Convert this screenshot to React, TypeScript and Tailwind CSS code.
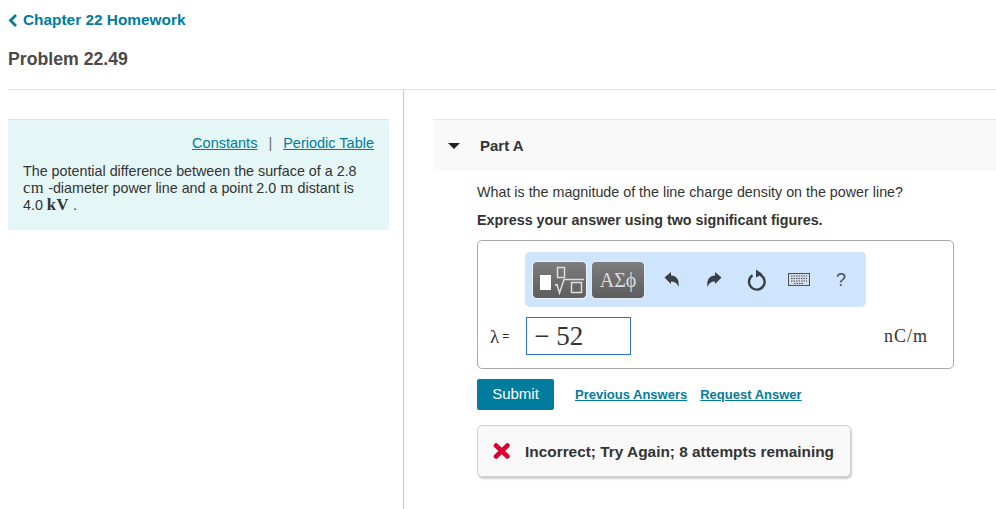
import React from 'react';

const serif = "font-['Liberation_Serif',serif]";

function Toolbar() {
  return (
    <div className="ml-[47px] mt-[11px] flex h-[55px] w-[341px] items-center rounded-[5px] bg-[#cfe4fd] pl-[7px]">
      <div className="flex h-[38px] w-[55px] items-center gap-[1px] rounded-[5px] border border-[#eef3f9] bg-gradient-to-b from-[#7d7d7d] to-[#5e5e5e] pl-[7px]">
        <div className="mt-[6px] h-[15px] w-[11px] bg-white" />
        <svg width="33" height="30" viewBox="0 0 33 30" fill="none" stroke="#dedede" strokeWidth="1.500">
          <rect x="5.500" y="2.500" width="7" height="10" />
          <path d="M3 20.500l2-1 2.500 8.500L12 14.500h20" />
          <rect x="19.500" y="17.500" width="10" height="10" />
        </svg>
      </div>
      <div className={`ml-[4px] flex h-[38px] w-[54px] items-center justify-center rounded-[5px] border border-[#e2e9f2] bg-gradient-to-b from-[#7d7d7d] to-[#5e5e5e] text-[20px] text-[#dcdcdc] ${serif}`}>
        ΑΣϕ
      </div>
      <svg className="ml-[19px]" width="16" height="17" viewBox="0 0 16 17" fill="#3a3f45">
        <path d="M0.500 6.500L7 1v3.500c5.500 0 8.500 4 7.500 11.500-1-3.500-3.500-5.500-7.500-5.500V13z" />
      </svg>
      <svg className="ml-[26px]" width="16" height="17" viewBox="0 0 16 17" fill="#3a3f45">
        <path d="M15.500 6.500L9 1v3.500C3.500 4.500.5 8.500 1.500 16c1-3.500 3.500-5.500 7.500-5.500V13z" />
      </svg>
      <svg className="ml-[25px]" width="20" height="22" viewBox="0 0 20 22" fill="none" stroke="#3a3f45" strokeWidth="2.400">
        <path d="M5.500 6.300a7.800 7.800 0 1 0 7.500-.6" />
        <path d="M9 0.500l6.500 4.500L9 8.500z" fill="#3a3f45" stroke="none" />
      </svg>
      <svg className="ml-[21px]" width="22" height="13" viewBox="0 0 22 13" fill="#d3dde8" stroke="#4b5157" strokeWidth="1">
        <rect x="0.500" y="0.500" width="21" height="12" />
        <path d="M3 3h16M3 5.500h16M3 8h16M6 10.500h10" strokeDasharray="1.500 1" />
      </svg>
      <span className="ml-[26px] text-[18px] leading-none text-[#4a4f55]">?</span>
    </div>
  );
}

export default function App() {
  return (
    <div className="h-[509px] w-[996px] overflow-hidden bg-white font-['Liberation_Sans',Arial,sans-serif] text-[#333]">
      {/* Header */}
      <div className="ml-[8px] h-[90px] border-b border-[#e2e2e2]">
        <a className="flex items-center pt-[11px] text-[15.400px] leading-[18px] font-bold text-[#007c9e]">
          <svg width="10" height="13" viewBox="0 0 10 13" fill="none" stroke="#007c9e" strokeWidth="2.800" className="mr-[5px]">
            <path d="M8 1L2.500 6.500 8 12" />
          </svg>
          Chapter 22 Homework
        </a>
        <h1 className="mt-[20px] text-[17.700px] leading-[20px] font-bold text-[#4a4a4a]">Problem 22.49</h1>
      </div>

      <div className="flex h-[419px]">
        {/* Left column */}
        <div className="w-[404px] shrink-0 border-r border-[#c8c8c8] pt-[29px] pl-[8px]">
          <div className="h-[111px] w-[381px] border-t border-[#e2e2e2] bg-[#e5f6f7] pt-[15px] pr-[15px] pl-[15px]">
            <div className="flex justify-end text-[14.500px] leading-[16px] text-[#007c9e]">
              <a className="underline">Constants</a>
              <span className="mx-[11px] text-[#666]">|</span>
              <a className="underline">Periodic Table</a>
            </div>
            <p className="mt-[12px] w-[340px] text-[14.300px] leading-[17px] text-[#333]">
              The potential difference between the surface of a 2.8{' '}
              <span className={`${serif} inline-block text-[16.500px] leading-[15px] tracking-[0.5px]`}>cm</span> -diameter power line and a point 2.0{' '}
              <span className={`${serif} inline-block text-[16.500px] leading-[15px] tracking-[0.5px]`}>m</span> distant is 4.0{' '}
              <span className={`${serif} inline-block text-[16.500px] leading-[15px] font-bold tracking-[0.5px]`}>kV</span> .
            </p>
          </div>
        </div>

        {/* Right column */}
        <div className="flex-1 pt-[29px] pl-[29px]">
          <div className="flex h-[52px] items-center border-t border-[#e6e6e6] bg-[#f9f9f9] pl-[15px]">
            <div className="h-0 w-0 border-x-[6px] border-t-[6px] border-x-transparent border-t-[#222]" />
            <span className="ml-[20px] pt-[1px] text-[15px] font-bold text-[#333]">Part A</span>
          </div>

          <div className="pl-[44px]">
            <p className="mt-[13px] text-[14.300px] leading-[16px] text-[#333]">What is the magnitude of the line charge density on the power line?</p>
            <p className="mt-[12px] text-[14.300px] leading-[16px] font-bold text-[#333]">Express your answer using two significant figures.</p>

            {/* Answer box */}
            <div className="mt-[12px] h-[129px] w-[477px] rounded-[5px] border border-[#a8a8a8]">
              <Toolbar />
              <div className="mt-[10px] flex items-center pr-[25px] pl-[12px]">
                <span className={`${serif} text-[19px] leading-none`}>λ</span>
                <span className="ml-[3px] text-[12px]">=</span>
                <div className={`ml-[17px] flex h-[38px] w-[105px] items-center border border-[#2f6fd6] pl-[7px] text-[27px] text-[#333] ${serif}`}>
                  − 52
                </div>
                <span className={`ml-auto text-[18px] tracking-[1px] text-[#333] ${serif}`}>nC/m</span>
              </div>
            </div>

            {/* Actions */}
            <div className="mt-[10px] flex items-center">
              <button className="h-[31px] w-[77px] rounded-[2px] bg-[#007c9e] text-[15px] text-white">Submit</button>
              <a className="ml-[21px] text-[13px] font-bold text-[#007c9e] underline">Previous Answers</a>
              <a className="ml-[13px] text-[13px] font-bold text-[#007c9e] underline">Request Answer</a>
            </div>

            {/* Feedback */}
            <div className="mt-[15px] flex h-[52px] w-[374px] items-center rounded-[5px] border border-[#cfcfcf] bg-[#f9f9f9] pl-[15px] shadow-[1px_2px_2px_rgba(0,0,0,0.2)]">
              <svg width="18" height="16" viewBox="0 0 18 16" fill="none" stroke="#d9002f" strokeWidth="4.500" strokeLinecap="round">
                <path d="M3 2.500l11.500 11M14.500 2.500L3 13.500" />
              </svg>
              <span className="ml-[14px] pt-[1px] text-[15.400px] font-bold text-[#333]">Incorrect; Try Again; 8 attempts remaining</span>
            </div>
          </div>
        </div>
      </div>
    </div>
  );
}
